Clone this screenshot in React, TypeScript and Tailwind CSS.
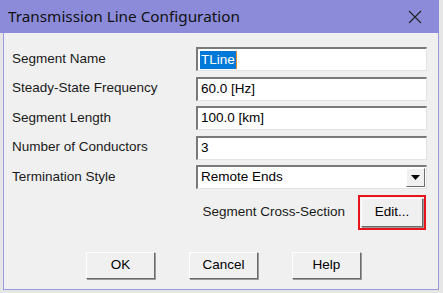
const fields = [
  { label: 'Segment Name', value: 'TLine', selected: true },
  { label: 'Steady-State Frequency', value: '60.0 [Hz]' },
  { label: 'Segment Length', value: '100.0 [km]' },
  { label: 'Number of Conductors', value: '3' },
]

const sunken =
  'border-t-2 border-l-2 border-b border-r border-t-[#7a7a7a] border-l-[#7a7a7a] border-b-[#e3e3e3] border-r-[#e3e3e3] bg-white'

const raised =
  'border border-t-white border-l-white border-b-[#6b6b6b] border-r-[#6b6b6b] shadow-[1px_1px_0_#9a9a9a] bg-[#f0f0f0]'

function Button({ children, className = '' }: { children: React.ReactNode; className?: string }) {
  return (
    <div className={`${raised} flex items-center justify-center text-[13.5px] text-black ${className}`}>
      {children}
    </div>
  )
}

export default function App() {
  return (
    <div
      className="w-[443px] h-[293px] bg-[#e6e6e6] overflow-hidden"
      style={{ fontFamily: '"Liberation Sans", Arial, sans-serif' }}
    >
      <div className="w-[439px] h-[290px] flex flex-col">
        <div className="h-[33px] bg-[#8b8bd9] flex items-center pl-[8px] pr-[14px]">
          <span
            className="text-[15.3px] text-[#111] flex-1"
            style={{ fontFamily: '"Noto Sans", "Open Sans", sans-serif' }}
          >
            Transmission Line Configuration
          </span>
          <svg width="16" height="16" viewBox="0 0 16 16" className="mr-[2px]">
            <path d="M2 2 L14 14 M14 2 L2 14" stroke="#222" strokeWidth="1.1" />
          </svg>
        </div>
        <div className="flex-1 ml-[3px] border-l border-r border-b border-[#9a9ae0] bg-[#f0f0f0] pl-[8px] pr-[11px] pt-[14px] flex flex-col">
          <div className="flex flex-col gap-[5.5px]">
            {fields.map((f) => (
              <div key={f.label} className="flex items-center h-[24px]">
                <span className="w-[184px] text-[13.5px] text-[#1a1a1a]">{f.label}</span>
                <div className={`${sunken} flex-1 h-full flex items-center pl-[2px]`}>
                  {f.selected ? (
                    <span className="bg-[#0078d7] text-white text-[13.5px] px-[1px] leading-[18px] border-r border-[#e08a3a]">
                      {f.value}
                    </span>
                  ) : (
                    <span className="text-[13.5px] text-black px-[1px]">{f.value}</span>
                  )}
                </div>
              </div>
            ))}
            <div className="flex items-center h-[24px]">
              <span className="w-[184px] text-[13.5px] text-[#1a1a1a]">Termination Style</span>
              <div className={`${sunken} flex-1 h-full flex items-center pl-[3px] pr-[1px]`}>
                <span className="text-[13.5px] text-black flex-1">Remote Ends</span>
                <div className={`${raised} w-[19px] h-[19px] flex items-center justify-center shadow-none`}>
                  <svg width="9" height="5" viewBox="0 0 9 5">
                    <path d="M0 0 L9 0 L4.5 5 Z" fill="#000" />
                  </svg>
                </div>
              </div>
            </div>
          </div>
          <div className="flex items-center justify-end mt-[6px] pr-[1px]">
            <span className="text-[13.5px] text-[#1a1a1a] mr-[13px]">Segment Cross-Section</span>
            <div className="border-2 border-[#e8141b] p-[1px] w-[68px] h-[35px] flex">
              <Button className="flex-1">Edit...</Button>
            </div>
          </div>
          <div className="flex gap-[34px] mt-[22px] pl-[74px]">
            <Button className="w-[69px] h-[27px]">OK</Button>
            <Button className="w-[69px] h-[27px]">Cancel</Button>
            <Button className="w-[69px] h-[27px]">Help</Button>
          </div>
        </div>
      </div>
    </div>
  )
}
